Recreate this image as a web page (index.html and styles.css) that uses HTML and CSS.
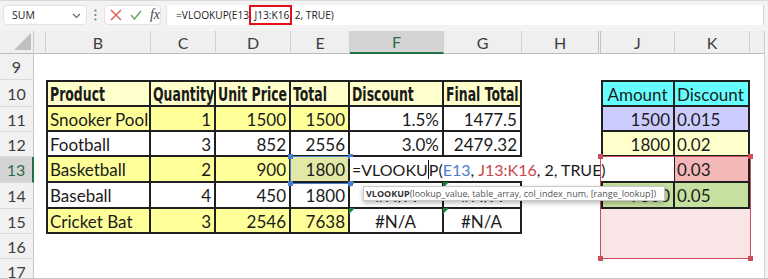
FILE: index.html
```html
<!DOCTYPE html>
<html lang="en">
<head>
<meta charset="utf-8">
<title>VLOOKUP</title>
<link rel="stylesheet" href="styles.css">
</head>
<body>
<div class="app">
  <div class="fbar">
    <div class="namebox">
      <span class="nb-text">SUM</span>
      <svg class="chev" width="9" height="6" viewBox="0 0 9 6"><polyline points="1,1 4.5,4.5 8,1" fill="none" stroke="#666" stroke-width="1.2"/></svg>
    </div>
    <div class="dots">
      <svg width="3" height="12" viewBox="0 0 3 12"><circle cx="1.5" cy="1.5" r="1.1" fill="#777"/><circle cx="1.5" cy="6" r="1.1" fill="#777"/><circle cx="1.5" cy="10.5" r="1.1" fill="#777"/></svg>
    </div>
    <div class="btns">
      <svg width="12" height="12" viewBox="0 0 12 12"><path d="M1 1 L11 11 M11 1 L1 11" stroke="#e0594f" stroke-width="1.4" fill="none"/></svg>
      <svg width="12" height="10" viewBox="0 0 12 10"><polyline points="1,5 4.5,9 11,1" fill="none" stroke="#5fa75b" stroke-width="1.4"/></svg>
      <span class="fx">fx</span>
    </div>
    <div class="finput">=VLOOKUP(E13, <span class="hl">J13:K16</span>, 2, TRUE)</div>
  </div>

  <div class="grid">
    <!-- column headers -->
    <div class="corner"><svg width="17" height="17" viewBox="0 0 17 17"><polygon points="17,0 17,17 0,17" fill="#bfbfbf"/></svg></div>
    <div class="ch"></div>
    <div class="ch">B</div>
    <div class="ch">C</div>
    <div class="ch">D</div>
    <div class="ch">E</div>
    <div class="ch sel">F</div>
    <div class="ch">G</div>
    <div class="ch dbl">H</div>
    <div class="ch">J</div>
    <div class="ch">K</div>
    <div class="ch"></div>

    <!-- row 9 -->
    <div class="rh">9</div>
    <div class="c"></div><div class="c"></div><div class="c"></div><div class="c"></div><div class="c"></div><div class="c"></div><div class="c"></div><div class="c"></div><div class="c"></div><div class="c"></div><div class="c"></div>

    <!-- row 10 -->
    <div class="rh">10</div>
    <div class="c"></div>
    <div class="c t l top yh th"><span class="n">Product</span></div>
    <div class="c t top yh th"><span class="n">Quantity</span></div>
    <div class="c t top yh th"><span class="n">Unit Price</span></div>
    <div class="c t top yh th"><span class="n">Total</span></div>
    <div class="c t top yh th"><span class="n">Discount</span></div>
    <div class="c t top yh th"><span class="n">Final Total</span></div>
    <div class="c"></div>
    <div class="c t l top cy ctr">Amount</div>
    <div class="c t top cy">Discount</div>
    <div class="c"></div>

    <!-- row 11 -->
    <div class="rh">11</div>
    <div class="c"></div>
    <div class="c t l y">Snooker Pool</div>
    <div class="c t y r">1</div>
    <div class="c t y r">1500</div>
    <div class="c t y r">1500</div>
    <div class="c t r">1.5%</div>
    <div class="c t r">1477.5</div>
    <div class="c"></div>
    <div class="c t l lv r">1500</div>
    <div class="c t lv">0.015</div>
    <div class="c"></div>

    <!-- row 12 -->
    <div class="rh">12</div>
    <div class="c"></div>
    <div class="c t l">Football</div>
    <div class="c t r">3</div>
    <div class="c t r">852</div>
    <div class="c t r">2556</div>
    <div class="c t r">3.0%</div>
    <div class="c t r">2479.32</div>
    <div class="c"></div>
    <div class="c t l ly r">1800</div>
    <div class="c t ly">0.02</div>
    <div class="c"></div>

    <!-- row 13 -->
    <div class="rh sel">13</div>
    <div class="c"></div>
    <div class="c t l y">Basketball</div>
    <div class="c t y r">2</div>
    <div class="c t y r">900</div>
    <div class="c t es r">1800</div>
    <div class="c t"></div>
    <div class="c t"></div>
    <div class="c"></div>
    <div class="c t l r">3000</div>
    <div class="c t pk">0.03</div>
    <div class="c"></div>

    <!-- row 14 -->
    <div class="rh">14</div>
    <div class="c"></div>
    <div class="c t l">Baseball</div>
    <div class="c t r">4</div>
    <div class="c t r">450</div>
    <div class="c t r">1800</div>
    <div class="c t ctr err">#N/A</div>
    <div class="c t ctr err">#N/A</div>
    <div class="c"></div>
    <div class="c t l gr r">7500</div>
    <div class="c t gr">0.05</div>
    <div class="c"></div>

    <!-- row 15 -->
    <div class="rh">15</div>
    <div class="c"></div>
    <div class="c t l y">Cricket Bat</div>
    <div class="c t y r">3</div>
    <div class="c t y r">2546</div>
    <div class="c t y r">7638</div>
    <div class="c t ctr err">#N/A</div>
    <div class="c t ctr err">#N/A</div>
    <div class="c"></div>
    <div class="c rg"></div>
    <div class="c rg"></div>
    <div class="c"></div>

    <!-- row 16 -->
    <div class="rh">16</div>
    <div class="c"></div><div class="c"></div><div class="c"></div><div class="c"></div><div class="c"></div><div class="c"></div><div class="c"></div><div class="c"></div>
    <div class="c rg"></div><div class="c rg"></div>
    <div class="c"></div>

    <!-- row 17 -->
    <div class="rh">17</div>
    <div class="c"></div><div class="c"></div><div class="c"></div><div class="c"></div><div class="c"></div><div class="c"></div><div class="c"></div><div class="c"></div><div class="c"></div><div class="c"></div><div class="c"></div>

    <!-- overlays -->
    <div class="ref-sel"><i class="k tlc"></i><i class="k trc"></i><i class="k blc"></i><i class="k brc"></i></div>
    <div class="edit">=VLOOKU<span class="caret"></span>P(<span class="ref-e">E13</span>, <span class="ref-j">J13:K16</span>, 2, TRUE)</div>
    <div class="range"><i class="k tlc"></i><i class="k trc"></i><i class="k blc"></i><i class="k brc"></i></div>
    <div class="tip"><b>VLOOKUP</b>(lookup_value, table_array, col_index_num, [range_lookup])</div>
  </div>
</div>
</body>
</html>
```

FILE: styles.css
```css
* { box-sizing: border-box; }

html, body {
  margin: 0;
  padding: 0;
  background: #f3f3f3;
}

.app {
  width: 768px;
  height: 278px;
  overflow: hidden;
  border-bottom: 1px solid #c6c6c6;
  background: #f3f3f3;
  box-sizing: content-box;
}

/* ---------- formula bar ---------- */
.fbar {
  height: 31px;
  display: flex;
  align-items: flex-start;
  padding: 4px 4px 0 3px;
  border-top: 1px solid #d9d9d9;
  font-family: "Open Sans", "Noto Sans", sans-serif;
  color: #222;
}

.namebox {
  width: 84px;
  height: 20px;
  background: #fff;
  border: 1px solid #e3e3e3;
  border-radius: 4px;
  display: flex;
  align-items: center;
  justify-content: space-between;
  padding: 0 5px 0 8px;
  font-size: 10.5px;
}

.chev { margin-top: 1px; }

.dots {
  width: 17px;
  height: 20px;
  display: flex;
  align-items: center;
  justify-content: center;
}

.btns {
  width: 57px;
  height: 20px;
  background: #fff;
  border: 1px solid #e3e3e3;
  border-radius: 4px;
  display: flex;
  align-items: center;
  gap: 8px;
  padding-left: 5px;
}

.fx {
  font-family: "Liberation Serif", "DejaVu Serif", serif;
  font-style: italic;
  font-size: 14px;
  color: #444;
  line-height: 1;
}

.finput {
  margin-left: 5px;
  flex: 1;
  height: 20px;
  background: #fff;
  border-left: 1px solid #e3e3e3;
  border-right: 1px solid #d0d0d0;
  display: flex;
  align-items: center;
  padding-left: 9px;
  font-size: 10.2px;
  white-space: pre;
}

.hl {
  position: relative;
}

.hl::after {
  content: "";
  position: absolute;
  left: -5px;
  right: -3px;
  top: -3px;
  bottom: -3px;
  border: 2px solid #e3101a;
}

/* ---------- grid ---------- */
.grid {
  position: relative;
  width: 765px;
  display: grid;
  grid-template-columns: 34px 12px 105px 65px 75px 59px 94px 78px 79px 74px 75px 15px;
  grid-template-rows: 23px 26px 27px 25px 25px 26px 26px 25px 25px 25px;
  background: #fff;
  font-family: "Lato", "Open Sans", sans-serif;
  font-size: 17px;
  color: #1b1b1b;
  border-right: 1px solid #d2d2d2;
}

.corner {
  background: #efefef;
  border-right: 1px solid #c9c9c9;
  border-bottom: 1px solid #bcbcbc;
  display: flex;
  align-items: flex-end;
  justify-content: flex-end;
  padding: 0 2px 3px 0;
}

.ch {
  background: #efefef;
  border-right: 1px solid #cfcfcf;
  border-bottom: 1px solid #bcbcbc;
  display: flex;
  align-items: center;
  justify-content: center;
  font-size: 16px;
  color: #3d3d3d;
}

.ch.dbl { border-right: 3px double #c2c2c2; }

.ch.sel {
  background: #d4d4d4;
  border-bottom: 2px solid #217346;
  color: #2e6b4a;
}

.rh {
  background: #f1f1f1;
  border-right: 1px solid #c9c9c9;
  border-bottom: 1px solid #dadada;
  display: flex;
  align-items: center;
  justify-content: center;
  font-size: 16px;
  color: #3d3d3d;
}

.rh.sel {
  background: #d4d4d4;
  border-right: 2px solid #217346;
  color: #2e6b4a;
}

.c {
  position: relative;
  display: flex;
  align-items: center;
  padding: 1px 3px 0 2px;
  white-space: nowrap;
  overflow: visible;
}

.t {
  border-right: 2px solid #1f1f1f;
  border-bottom: 2px solid #1f1f1f;
}
.t.l { border-left: 2px solid #1f1f1f; }
.t.top { border-top: 2px solid #1f1f1f; }

.r { justify-content: flex-end; }
.ctr { justify-content: center; }

.th {
  font-family: "DejaVu Sans Condensed", "DejaVu Sans", sans-serif;
  font-stretch: condensed;
  font-weight: 700;
  font-size: 19px;
  padding-top: 0;
}

.th .n {
  display: inline-block;
  transform: scaleX(0.73);
  transform-origin: left center;
}

.y  { background: #ffff99; }
.yh { background: #ffffcc; }
.cy { background: #66ffff; }
.lv { background: #ccccff; }
.ly { background: #ffffcc; }
.pk { background: #f4b8b8; }
.gr { background: #c6e0a0; }
.rg { background: #f9e5e5; }
.es { background: #e2e8a6; }

.err::before {
  content: "";
  position: absolute;
  left: -1px;
  top: -1px;
  border-top: 6px solid #1e7b3c;
  border-right: 6px solid transparent;
}

/* ---------- overlays ---------- */
.ref-sel {
  position: absolute;
  left: 290px;
  top: 125px;
  width: 61px;
  height: 28px;
  border: 1px solid #4a7fcf;
}

.range {
  position: absolute;
  left: 600px;
  top: 125px;
  width: 151px;
  height: 103px;
  border: 1.5px solid #c9505a;
}

.k {
  position: absolute;
  width: 5px;
  height: 5px;
}
.ref-sel .k { background: #4a7fcf; }
.range .k { background: #c9505a; }
.tlc { left: -3px; top: -3px; }
.trc { right: -3px; top: -3px; }
.blc { left: -3px; bottom: -3px; }
.brc { right: -3px; bottom: -3px; }

.edit {
  position: absolute;
  left: 350px;
  top: 126px;
  width: 324px;
  height: 24px;
  background: #fff;
  display: flex;
  align-items: center;
  padding: 1px 0 0 2px;
  white-space: pre;
  font-size: 16px;
  color: #1b1b1b;
}

.caret {
  display: inline-block;
  width: 1px;
  height: 19px;
  background: #111;
}

.ref-e { color: #4a7bd0; }
.ref-j { color: #c9474b; }

.tip {
  position: absolute;
  left: 363px;
  top: 155px;
  width: 302px;
  height: 15px;
  background: #fff;
  border: 1px solid #c8c8c8;
  box-shadow: 0 2px 5px rgba(0, 0, 0, 0.28);
  font-family: "Open Sans", "Noto Sans", sans-serif;
  font-size: 9px;
  line-height: 13px;
  color: #555;
  padding-left: 2px;
  white-space: nowrap;
  overflow: hidden;
}

.tip b { color: #333; }
```
